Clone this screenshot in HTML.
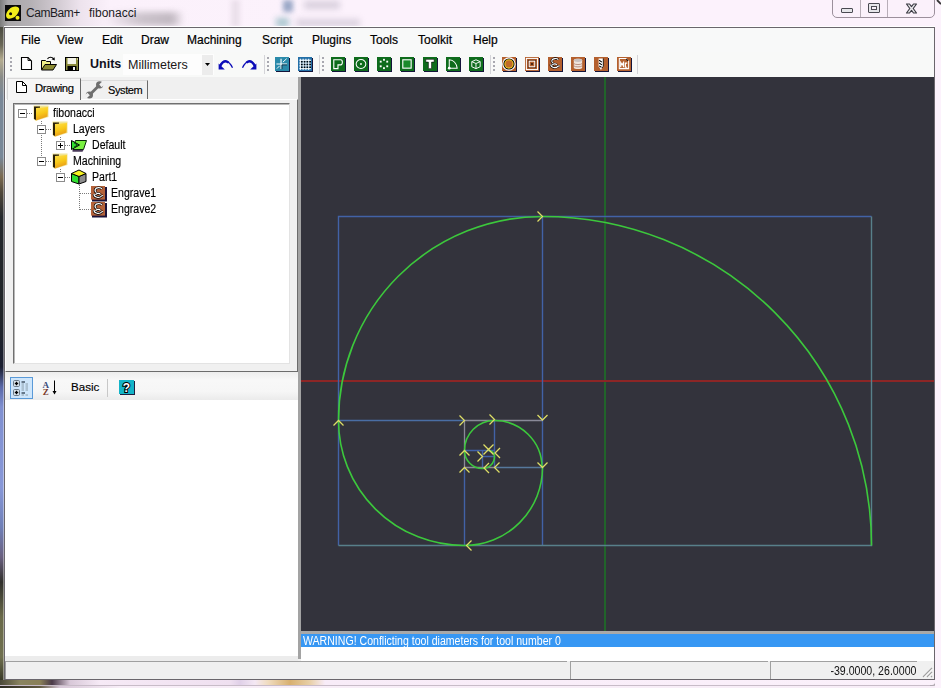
<!DOCTYPE html>
<html><head><meta charset="utf-8">
<style>
*{margin:0;padding:0;box-sizing:border-box}
html,body{width:941px;height:688px;overflow:hidden}
body{position:relative;font-family:"Liberation Sans",sans-serif;font-size:12px;color:#000;background:#fcf2fc}
.a{position:absolute}
svg{display:block}
#win{left:4px;top:27px;width:931px;height:653px;border:1px solid #6a666c;background:#f0f0f0}
#menubar{left:5px;top:28px;width:929px;height:24px;background:#f8f9f9}
#menubar span{position:absolute;top:5px;color:#000;-webkit-text-stroke:0.2px #000}
#toolbar{left:5px;top:52px;width:929px;height:25px;background:#f8f9f8}
#draw{left:301px;top:77px;width:633px;height:554px;background:#33333c;overflow:hidden}
#vsplit{left:298px;top:77px;width:3px;height:582px;background:#a3a3a3}
#leftp{left:5px;top:77px;width:293px;height:295px;background:#f0f0f0}
#tabpage{left:5px;top:99px;width:293px;height:273px;border-top:1px solid #fff;border-left:1px solid #fff;border-right:1px solid #6c6c6c;border-bottom:1px solid #6c6c6c}
#tree{left:13px;top:103px;width:277px;height:261px;background:#fff;border-top:1px solid #707070;border-left:1px solid #707070;border-right:1px solid #e3e3e3;border-bottom:1px solid #e3e3e3;box-shadow:inset 1px 1px 0 #b8b8b8}
#ptool{left:5px;top:372px;width:293px;height:28px;background:linear-gradient(#ededed,#f8f8f8 30%,#f6f6f6 70%,#ebebeb)}
#pgrid{left:5px;top:400px;width:293px;height:256px;background:#fff}
#warn{left:301px;top:631px;width:633px;height:30px;background:#fff}
#warnbar{left:301px;top:634px;width:633px;height:13px;background:#3797f3;color:#fff;font-size:12px;line-height:15px;padding-left:2px;white-space:nowrap;overflow:hidden}
#warnline{left:301px;top:631px;width:633px;height:3px;background:#a8a8a8}
#status{left:5px;top:661px;width:929px;height:18px;background:#f0f0f0}
.sp{position:absolute;top:0;height:18px;border-top:1px solid #a0a0a0;border-left:1px solid #a0a0a0}
.tr{position:absolute;white-space:nowrap;color:#000;-webkit-text-stroke:0.15px #000}
.ic{position:absolute}
</style></head><body>
<!-- glass background -->
<div class="a" style="left:0;top:0;width:941px;height:27px;background:linear-gradient(90deg,#7c7c7c 0,#a9a7a9 8px,#b4b0b4 30px,#cfc8cf 55px,#ede3ed 80px,#fbf1fb 110px,#fcf2fc 300px,#fcf2fc 941px)"></div>

<div class="a" style="left:231px;top:0;width:9px;height:27px;background:#ebe0eb;filter:blur(2px)"></div>
<div class="a" style="left:104px;top:12px;width:80px;height:14px;background:linear-gradient(90deg,#d0c8d000,#b8b0b8 45%,#a8a0a8 85%,#c8c0c800);filter:blur(3px);opacity:.7"></div>
<div class="a" style="left:283px;top:0;width:10px;height:12px;background:#7088b0;filter:blur(2.5px);opacity:.7"></div>
<div class="a" style="left:304px;top:1px;width:36px;height:8px;background:#c0b8c8;filter:blur(3px);opacity:.6"></div>
<div class="a" style="left:276px;top:18px;width:13px;height:9px;background:#70a8b0;filter:blur(3px);opacity:.6"></div>
<div class="a" style="left:296px;top:19px;width:64px;height:8px;background:#c0b8c8;filter:blur(3px);opacity:.55"></div>
<div class="a" style="left:0;top:27px;width:4px;height:653px;background:linear-gradient(#4a4a40 0,#6a6858 18px,#b4ac90 33px,#8a8c88 50px,#7a8898 70px,#788898 130px,#7a6a50 150px,#50483a 165px,#24282c 190px,#202428 290px,#1a1e30 340px,#5a68a8 360px,#8090d0 380px,#8898d8 460px,#7080b8 500px,#6a6080 530px,#30302c 555px,#6a6a4a 590px,#707050 630px,#3a3a28 653px)"></div>
<div class="a" style="left:0;top:680px;width:941px;height:8px;background:linear-gradient(90deg,#4a4838 0,#8a8460 20px,#8a8058 40px,#4a3a48 52px,#d8c8d8 70px,#f6eaf6 100px,#efe0f0 230px,#e0d0e8 240px,#f4e8f4 255px,#f0dcc0 268px,#d8b070 290px,#e8d0a8 310px,#f8ecf8 325px,#fbf1fb 941px)"></div>
<div class="a" style="left:0;top:685px;width:936px;height:1px;background:#c8bcc8"></div>
<div class="a" style="left:0;top:686px;width:941px;height:2px;background:linear-gradient(90deg,#2a2820 0,#605840 40px,#d8c8d8 60px,#f8eef8 120px,#f8eef8 941px)"></div>
<div class="a" style="left:936px;top:680px;width:5px;height:8px;background:#fcf2fc"></div>
<div class="a" style="left:930px;top:681px;width:6px;height:5px;border-right:1px solid #b0a8b0;border-bottom:1px solid #b0a8b0;border-radius:0 0 4px 0"></div>
<div class="a" style="left:935px;top:27px;width:6px;height:661px;background:#fcf2fc"></div>
<!-- title icon -->
<svg class="a" style="left:5px;top:5px" width="16" height="16" viewBox="0 0 16 16">
<rect width="16" height="16" fill="#0a0a0a"/>
<path d="M1.2,11.5 C0.6,8.5 3,4.2 7,2.2 C10.5,0.6 14,1.5 14.2,4 C14.4,6.8 11.5,11 8.5,12.6 C5.5,14.4 1.8,14.2 1.2,11.5 Z" fill="#f2ee1a"/>
<circle cx="5.6" cy="8.8" r="1.5" fill="#0a0a0a"/>
<circle cx="12.5" cy="12.8" r="2" fill="#f2ee1a"/>
</svg>
<div class="a" style="left:26px;top:6px;font-size:12px;letter-spacing:-0.45px;color:#1c1c24;white-space:nowrap">CamBam+</div><div class="a" style="left:89px;top:6px;font-size:12px;letter-spacing:0px;color:#1c1c24;white-space:nowrap">fibonacci</div>
<!-- window buttons -->
<div class="a" style="left:832px;top:-3px;width:103px;height:21px;border:1px solid #9c909c;border-radius:0 0 5px 5px;background:#fbf1fb"></div>
<div class="a" style="left:860px;top:0;width:1px;height:17px;background:#b8aeb8"></div>
<div class="a" style="left:887px;top:0;width:1px;height:17px;background:#b8aeb8"></div>
<div class="a" style="left:841px;top:8px;width:12px;height:5px;border:1px solid #4a4a52;border-radius:1px;background:#e6e6ea"></div>
<div class="a" style="left:868px;top:3px;width:12px;height:10px;border:1px solid #4a4a52;border-radius:1px;background:#e6e6ea"></div>
<div class="a" style="left:871px;top:6px;width:6px;height:4px;border:1px solid #4a4a52;background:#f8f0f8"></div>
<svg class="a" style="left:904px;top:2px" width="15" height="13" viewBox="0 0 15 13">
<path d="M2.5,2 L5.5,2 L7.5,4.6 L9.5,2 L12.5,2 L9.2,6.5 L12.5,11 L9.5,11 L7.5,8.4 L5.5,11 L2.5,11 L5.8,6.5 Z" fill="#ecebef" stroke="#3c3c44" stroke-width="1.2" stroke-linejoin="round"/>
</svg>
<svg class="a" style="left:936px;top:0" width="5" height="5"><path d="M1,0 L5,4" stroke="#333" stroke-width="1.8"/></svg>
<div class="a" style="left:4px;top:26px;width:931px;height:1px;background:#fff"></div>
<div class="a" id="win"></div>
<div class="a" style="left:3px;top:27px;width:1px;height:653px;background:rgba(255,255,255,.4)"></div>
<!-- menubar -->
<div class="a" id="menubar">
<span style="left:16px">File</span><span style="left:52px">View</span><span style="left:97px">Edit</span><span style="left:136px">Draw</span><span style="left:182px">Machining</span><span style="left:257px">Script</span><span style="left:307px">Plugins</span><span style="left:365px">Tools</span><span style="left:413px">Toolkit</span><span style="left:468px">Help</span>
</div>
<div class="a" id="toolbar"></div>
<!-- grips -->
<svg class="a" style="left:9px;top:56px" width="4" height="17"><g fill="#a8a8b0"><rect x="1" y="1" width="2" height="2"/><rect x="1" y="5" width="2" height="2"/><rect x="1" y="9" width="2" height="2"/><rect x="1" y="13" width="2" height="2"/></g></svg>
<div class="a" style="left:264px;top:55px;width:1px;height:19px;background:#d4d4d8"></div>
<svg class="a" style="left:266px;top:56px" width="4" height="17"><g fill="#a8a8b0"><rect x="1" y="1" width="2" height="2"/><rect x="1" y="5" width="2" height="2"/><rect x="1" y="9" width="2" height="2"/><rect x="1" y="13" width="2" height="2"/></g></svg>
<div class="a" style="left:319px;top:55px;width:1px;height:19px;background:#d4d4d8"></div>
<svg class="a" style="left:321px;top:56px" width="4" height="17"><g fill="#a8a8b0"><rect x="1" y="1" width="2" height="2"/><rect x="1" y="5" width="2" height="2"/><rect x="1" y="9" width="2" height="2"/><rect x="1" y="13" width="2" height="2"/></g></svg>
<div class="a" style="left:490px;top:55px;width:1px;height:19px;background:#d4d4d8"></div>
<svg class="a" style="left:492px;top:56px" width="4" height="17"><g fill="#a8a8b0"><rect x="1" y="1" width="2" height="2"/><rect x="1" y="5" width="2" height="2"/><rect x="1" y="9" width="2" height="2"/><rect x="1" y="13" width="2" height="2"/></g></svg>
<div class="a" style="left:637px;top:55px;width:1px;height:19px;background:#d4d4d8"></div>
<!-- new/open/save -->
<svg class="a" style="left:20px;top:56px" width="13" height="15" viewBox="0 0 13 15">
<path d="M1.5,1.5 H8 L11.5,5 V13.5 H1.5 Z" fill="#fff" stroke="#000" stroke-width="1.1"/>
<path d="M8,1.5 V4.5 H11" fill="none" stroke="#000" stroke-width="0.9"/>
</svg>
<svg class="a" style="left:40px;top:56px" width="18" height="16" viewBox="0 0 18 16">
<path d="M1.5,13.5 V4.5 H5.5 L6.5,5.5 H10.5 V8.5" fill="#f0f088" stroke="#000" stroke-width="1"/>
<path d="M1.5,14 L5,8.5 H16.5 L13,14 Z" fill="#8c8c34" stroke="#000" stroke-width="1"/>
<path d="M7.5,2.8 C9,0.8 12,0.8 13.5,2.6" fill="none" stroke="#000" stroke-width="1.1"/>
<path d="M11.5,3.2 L14.8,4.6 L14.6,1.2 Z" fill="#000"/>
</svg>
<svg class="a" style="left:65px;top:57px" width="14" height="14" viewBox="0 0 14 14">
<rect x="0.5" y="0.5" width="13" height="13" fill="#8a8a3a" stroke="#000"/>
<rect x="2.5" y="1" width="8.5" height="6" fill="#f4f4e8"/>
<rect x="2.5" y="9" width="9" height="4.5" fill="#000"/>
<rect x="8" y="10" width="2" height="3" fill="#f0f0f0"/>
<rect x="12" y="1.5" width="1" height="1" fill="#fff"/>
</svg>
<div class="a" style="left:90px;top:57px;font-weight:bold;font-size:12.5px;color:#101020">Units</div>
<!-- combo -->
<div class="a" style="left:123px;top:54px;width:91px;height:21px;background:#fdfdfd"></div>
<div class="a" style="left:202px;top:55px;width:11px;height:20px;background:#ececec"></div>
<svg class="a" style="left:205px;top:63px" width="6" height="4"><path d="M0,0 H5 L2.5,3 Z" fill="#000"/></svg>
<div class="a" style="left:128px;top:58px;font-size:12.5px;color:#201818">Millimeters</div>
<!-- undo/redo -->
<svg class="a" style="left:216px;top:58px" width="18" height="13" viewBox="0 0 18 13">
<path d="M16.5,9.8 C14.5,5.5 12,3.4 9.8,3.4 C7.5,3.4 5.5,5.2 4.2,8" fill="none" stroke="#0c0cb8" stroke-width="1.3"/>
<path d="M12.5,4.6 C11.5,3.8 10.6,3.2 9.8,3.2 C7.5,3.2 5.5,5 4,8.3" fill="none" stroke="#0c0cb8" stroke-width="2.4"/>
<path d="M2.6,5.6 L2.6,11.4 L8.8,11.4 Z" fill="#0c0cb8"/>
</svg>
<svg class="a" style="left:241px;top:58px" width="18" height="13" viewBox="0 0 18 13">
<path d="M1.5,9.8 C3.5,5.5 6,3.4 8.2,3.4 C10.5,3.4 12.5,5.2 13.8,8" fill="none" stroke="#0c0cb8" stroke-width="1.3"/>
<path d="M5.5,4.6 C6.5,3.8 7.4,3.2 8.2,3.2 C10.5,3.2 12.5,5 14,8.3" fill="none" stroke="#0c0cb8" stroke-width="2.4"/>
<path d="M15.4,5.6 L15.4,11.4 L9.2,11.4 Z" fill="#0c0cb8"/>
</svg>
<!-- tool icons -->
<svg class="a" style="left:275px;top:57px" width="15" height="15" viewBox="0 0 15 15">
<rect x="1" y="1" width="14" height="14" fill="#14143a"/>
<rect x="0" y="0" width="14" height="14" fill="#2a8aaa"/>
<g transform="scale(0.93)">
<path d="M6.5,2 V13 M1.5,7.5 H13" stroke="#ffffff" stroke-width="1.2" fill="none"/><path d="M7.5,8.5 V13 M7.5,8.5 H13" stroke="#0a2a40" stroke-width="0.9" fill="none"/><path d="M2,12.5 L5,9.5 M8.5,5.5 L12.5,1.8" stroke="#ffffff" stroke-width="1" fill="none"/></g></svg>
<svg class="a" style="left:298px;top:57px" width="15" height="15" viewBox="0 0 15 15">
<rect x="1" y="1" width="14" height="14" fill="#14143a"/>
<rect x="0" y="0" width="14" height="14" fill="#2470a8"/>
<g transform="scale(0.93)">
<path d="M2.5,2 V14" stroke="#ffffff" stroke-width="1.1"/><path d="M5.5,2 V14" stroke="#ffffff" stroke-width="1.1"/><path d="M8.5,2 V14" stroke="#ffffff" stroke-width="1.1"/><path d="M11.5,2 V14" stroke="#ffffff" stroke-width="1.1"/><path d="M1.5,3.5 H14" stroke="#ffffff" stroke-width="1.1"/><path d="M1.5,6.5 H14" stroke="#ffffff" stroke-width="1.1"/><path d="M1.5,9.5 H14" stroke="#ffffff" stroke-width="1.1"/><path d="M1.5,12.5 H14" stroke="#ffffff" stroke-width="1.1"/><rect x="3.3" y="4.3" width="1.6" height="1.6" fill="#000"/><rect x="3.3" y="7.3" width="1.6" height="1.6" fill="#000"/><rect x="3.3" y="10.3" width="1.6" height="1.6" fill="#000"/><rect x="6.3" y="4.3" width="1.6" height="1.6" fill="#000"/><rect x="6.3" y="7.3" width="1.6" height="1.6" fill="#000"/><rect x="6.3" y="10.3" width="1.6" height="1.6" fill="#000"/><rect x="9.3" y="4.3" width="1.6" height="1.6" fill="#000"/><rect x="9.3" y="7.3" width="1.6" height="1.6" fill="#000"/><rect x="9.3" y="10.3" width="1.6" height="1.6" fill="#000"/><rect x="12.3" y="4.3" width="1.6" height="1.6" fill="#000"/><rect x="12.3" y="7.3" width="1.6" height="1.6" fill="#000"/><rect x="12.3" y="10.3" width="1.6" height="1.6" fill="#000"/></g></svg>
<svg class="a" style="left:331px;top:57px" width="15" height="15" viewBox="0 0 15 15">
<rect x="1" y="1" width="14" height="14" fill="#14143a"/>
<rect x="0" y="0" width="14" height="14" fill="#0e6c1c"/>
<g transform="scale(0.93)">
<path d="M3,3 H10.5 C12.8,3 12.8,8.5 10.5,8.5 H7.5 V12.5 H3 Z" fill="#0e6c1c" stroke="#ffffff" stroke-width="1.2"/></g></svg>
<svg class="a" style="left:354px;top:57px" width="15" height="15" viewBox="0 0 15 15">
<rect x="1" y="1" width="14" height="14" fill="#14143a"/>
<rect x="0" y="0" width="14" height="14" fill="#0e6c1c"/>
<g transform="scale(0.93)">
<ellipse cx="7.5" cy="7.5" rx="5.2" ry="4.8" fill="none" stroke="#ffffff" stroke-width="1.1"/><circle cx="7.5" cy="7.5" r="1" fill="#ffffff"/></g></svg>
<svg class="a" style="left:377px;top:57px" width="15" height="15" viewBox="0 0 15 15">
<rect x="1" y="1" width="14" height="14" fill="#14143a"/>
<rect x="0" y="0" width="14" height="14" fill="#0e6c1c"/>
<g transform="scale(0.93)">
<rect x="6.5" y="2" width="2" height="2" fill="#ffffff"/><rect x="10" y="4" width="2" height="2" fill="#ffffff"/><rect x="10" y="9" width="2" height="2" fill="#ffffff"/><rect x="6.5" y="11" width="2" height="2" fill="#ffffff"/><rect x="3" y="9" width="2" height="2" fill="#ffffff"/><rect x="3" y="4" width="2" height="2" fill="#ffffff"/></g></svg>
<svg class="a" style="left:400px;top:57px" width="15" height="15" viewBox="0 0 15 15">
<rect x="1" y="1" width="14" height="14" fill="#14143a"/>
<rect x="0" y="0" width="14" height="14" fill="#0e6c1c"/>
<g transform="scale(0.93)">
<rect x="3" y="3" width="9" height="9" fill="#1a8a2a" stroke="#ffffff" stroke-width="1.2"/></g></svg>
<svg class="a" style="left:423px;top:57px" width="15" height="15" viewBox="0 0 15 15">
<rect x="1" y="1" width="14" height="14" fill="#14143a"/>
<rect x="0" y="0" width="14" height="14" fill="#0e6c1c"/>
<g transform="scale(0.93)">
<path d="M3,2.5 H12 V5.5 H9.2 V12.5 H5.8 V5.5 H3 Z" fill="#ffffff" stroke="#000" stroke-width="0.6"/></g></svg>
<svg class="a" style="left:446px;top:57px" width="15" height="15" viewBox="0 0 15 15">
<rect x="1" y="1" width="14" height="14" fill="#14143a"/>
<rect x="0" y="0" width="14" height="14" fill="#0e6c1c"/>
<g transform="scale(0.93)">
<path d="M3.5,12 V3 C8,3 11.5,7 12,12 Z" fill="none" stroke="#ffffff" stroke-width="1.1"/><circle cx="3.5" cy="12" r="1.5" fill="#ffffff"/></g></svg>
<svg class="a" style="left:469px;top:57px" width="15" height="15" viewBox="0 0 15 15">
<rect x="1" y="1" width="14" height="14" fill="#14143a"/>
<rect x="0" y="0" width="14" height="14" fill="#0e6c1c"/>
<g transform="scale(0.93)">
<path d="M3,5 L7.5,3 L12,5 V10.5 L7.5,12.5 L3,10.5 Z M3,5 L7.5,7 L12,5 M7.5,7 V12.5" fill="none" stroke="#ffffff" stroke-width="1"/></g></svg>
<svg class="a" style="left:502px;top:57px" width="15" height="15" viewBox="0 0 15 15">
<rect x="1" y="1" width="14" height="14" fill="#14143a"/>
<rect x="0" y="0" width="14" height="14" fill="#b4602e"/>
<g transform="scale(0.93)">
<circle cx="7.5" cy="7.5" r="7.2" fill="#fff"/><circle cx="7.5" cy="7.5" r="6" fill="#000"/><circle cx="7.5" cy="7.5" r="5" fill="#f0d020"/><circle cx="7.5" cy="7.5" r="3.9" fill="#c06a28"/></g></svg>
<svg class="a" style="left:525px;top:57px" width="15" height="15" viewBox="0 0 15 15">
<rect x="1" y="1" width="14" height="14" fill="#14143a"/>
<rect x="0" y="0" width="14" height="14" fill="#b4602e"/>
<g transform="scale(0.93)">
<rect x="1.5" y="1.5" width="12" height="12" fill="none" stroke="#ffffff" stroke-width="1.1"/><rect x="3.5" y="3.5" width="8" height="8" fill="none" stroke="#5a2a10" stroke-width="1"/><rect x="4.5" y="4.5" width="6" height="6" fill="none" stroke="#ffffff" stroke-width="1"/><rect x="6.5" y="6.5" width="2" height="2" fill="#402010"/></g></svg>
<svg class="a" style="left:548px;top:57px" width="15" height="15" viewBox="0 0 15 15">
<rect x="1" y="1" width="14" height="14" fill="#14143a"/>
<rect x="0" y="0" width="14" height="14" fill="#b4602e"/>
<g transform="scale(0.93)">
<path d="M11,2.8 C10,1.2 5,1.2 4.2,3.5 C3.8,5 4.3,6 5.5,6.5 M3,8 C3,11.5 8.5,12.5 10.5,10 L12.5,9.5 M4.5,9 C5.5,7 8.5,7 9.5,8.5" fill="none" stroke="#000" stroke-width="2.6"/><path d="M11,2.8 C10,1.2 5,1.2 4.2,3.5 C3.8,5 4.3,6 5.5,6.5 M3,8 C3,11.5 8.5,12.5 10.5,10 L12.5,9.5 M4.5,9 C5.5,7 8.5,7 9.5,8.5" fill="none" stroke="#fff" stroke-width="1.2"/></g></svg>
<svg class="a" style="left:571px;top:57px" width="15" height="15" viewBox="0 0 15 15">
<rect x="1" y="1" width="14" height="14" fill="#14143a"/>
<rect x="0" y="0" width="14" height="14" fill="#b4602e"/>
<g transform="scale(0.93)">
<path d="M3,3.5 C3,1.5 12,1.5 12,3.5 V11.5 C12,13.5 3,13.5 3,11.5 Z" fill="#f0e4dc"/><ellipse cx="7.5" cy="3.6" rx="4.3" ry="1.8" fill="#c8c0c0"/><path d="M3,7 C4,8.5 11,8.5 12,7 M3,9.5 C4,11 11,11 12,9.5" fill="none" stroke="#b08070" stroke-width="0.9"/></g></svg>
<svg class="a" style="left:594px;top:57px" width="15" height="15" viewBox="0 0 15 15">
<rect x="1" y="1" width="14" height="14" fill="#14143a"/>
<rect x="0" y="0" width="14" height="14" fill="#b4602e"/>
<g transform="scale(0.93)">
<path d="M5,1.5 H10 V10 L7.5,14 L5,10 Z" fill="#fff"/><path d="M10,1.5 V10 L8.5,12" fill="none" stroke="#000" stroke-width="0.9"/><path d="M5.5,3.5 L8.5,5.5 M5.5,6.5 L8.5,8.5 M5.5,9.5 L8,11" stroke="#000" stroke-width="1.1"/></g></svg>
<svg class="a" style="left:617px;top:57px" width="15" height="15" viewBox="0 0 15 15">
<rect x="1" y="1" width="14" height="14" fill="#14143a"/>
<rect x="0" y="0" width="14" height="14" fill="#b4602e"/>
<g transform="scale(0.93)">
<path d="M2.5,1.5 H9.5 L12.5,4.5 V12.5 H2.5 Z" fill="none" stroke="#fff" stroke-width="1.1"/><path d="M10,2.2 L12,4.2" stroke="#000" stroke-width="1.2"/><path d="M4,11 V6 L5.5,8.5 L7,6 V11 M11,6.5 H9 V11 H11" fill="none" stroke="#fff" stroke-width="1.3"/></g></svg>
<!-- left panel -->
<div class="a" id="leftp"></div>
<div class="a" id="tabpage"></div>
<div class="a" style="left:5px;top:77px;width:1px;height:22px;background:#fff"></div>
<div class="a" style="left:7px;top:78px;width:74px;height:22px;background:#f6f6f6;border-top:1px solid #d8d8d8;border-left:1px solid #d8d8d8;border-right:1px solid #6a6a6a"></div>
<div class="a" style="left:81px;top:80px;width:67px;height:19px;background:#f0f0f0;border-top:1px solid #dcdcdc;border-right:1px solid #6a6a6a"></div>
<svg class="a" style="left:15px;top:80px" width="13" height="14" viewBox="0 0 13 14"><path d="M1.5,1.5 H7.5 L11.5,5.5 V12.5 H1.5 Z" fill="#fff" stroke="#000"/><path d="M7.5,1.5 V5.5 H11.5" fill="none" stroke="#000"/></svg>
<div class="tr" style="left:35px;top:82px;font-size:11.3px;letter-spacing:-0.4px">Drawing</div>
<svg class="a" style="left:84px;top:80px" width="20" height="20" viewBox="0 0 20 20"><path d="M6,14.5 L15,5.5" stroke="#6e6e6e" stroke-width="2.8"/><circle cx="15.6" cy="4.8" r="3.6" fill="#6e6e6e"/><circle cx="5.4" cy="15" r="3.6" fill="#6e6e6e"/><path d="M15.2,4.6 L18.5,1.3 L21,4 L17.6,7.2 Z" fill="#f0f0f0"/><path d="M5.8,15.2 L2.5,18.5 L0,16 L3.4,12.8 Z" fill="#f0f0f0"/></svg>
<div class="tr" style="left:108px;top:84px;font-size:11px;letter-spacing:-0.4px">System</div>
<div class="a" id="tree"></div>
<div class="a" style="left:27px;top:113px;width:6px;height:1px;background:repeating-linear-gradient(90deg,#7a7a7a 0 1px,transparent 1px 2px)"></div>
<div class="a" style="left:41px;top:121px;width:1px;height:36px;background:repeating-linear-gradient(#7a7a7a 0 1px,transparent 1px 2px)"></div>
<div class="a" style="left:46px;top:129px;width:6px;height:1px;background:repeating-linear-gradient(90deg,#7a7a7a 0 1px,transparent 1px 2px)"></div>
<div class="a" style="left:46px;top:161px;width:6px;height:1px;background:repeating-linear-gradient(90deg,#7a7a7a 0 1px,transparent 1px 2px)"></div>
<div class="a" style="left:60px;top:137px;width:1px;height:4px;background:repeating-linear-gradient(#7a7a7a 0 1px,transparent 1px 2px)"></div>
<div class="a" style="left:60px;top:169px;width:1px;height:4px;background:repeating-linear-gradient(#7a7a7a 0 1px,transparent 1px 2px)"></div>
<div class="a" style="left:65px;top:145px;width:6px;height:1px;background:repeating-linear-gradient(90deg,#7a7a7a 0 1px,transparent 1px 2px)"></div>
<div class="a" style="left:65px;top:177px;width:6px;height:1px;background:repeating-linear-gradient(90deg,#7a7a7a 0 1px,transparent 1px 2px)"></div>
<div class="a" style="left:79px;top:185px;width:1px;height:25px;background:repeating-linear-gradient(#7a7a7a 0 1px,transparent 1px 2px)"></div>
<div class="a" style="left:80px;top:193px;width:11px;height:1px;background:repeating-linear-gradient(90deg,#7a7a7a 0 1px,transparent 1px 2px)"></div>
<div class="a" style="left:80px;top:209px;width:11px;height:1px;background:repeating-linear-gradient(90deg,#7a7a7a 0 1px,transparent 1px 2px)"></div>
<svg class="a" style="left:18px;top:109px" width="9" height="9" viewBox="0 0 9 9"><rect x="0.5" y="0.5" width="8" height="8" fill="#fff" stroke="#8c8c8c"/><path d="M2,4.5 H7" stroke="#000"/></svg>
<svg class="a" style="left:37px;top:125px" width="9" height="9" viewBox="0 0 9 9"><rect x="0.5" y="0.5" width="8" height="8" fill="#fff" stroke="#8c8c8c"/><path d="M2,4.5 H7" stroke="#000"/></svg>
<svg class="a" style="left:56px;top:141px" width="9" height="9" viewBox="0 0 9 9"><rect x="0.5" y="0.5" width="8" height="8" fill="#fff" stroke="#8c8c8c"/><path d="M2,4.5 H7" stroke="#000"/><path d="M4.5,2 V7" stroke="#000"/></svg>
<svg class="a" style="left:37px;top:157px" width="9" height="9" viewBox="0 0 9 9"><rect x="0.5" y="0.5" width="8" height="8" fill="#fff" stroke="#8c8c8c"/><path d="M2,4.5 H7" stroke="#000"/></svg>
<svg class="a" style="left:56px;top:173px" width="9" height="9" viewBox="0 0 9 9"><rect x="0.5" y="0.5" width="8" height="8" fill="#fff" stroke="#8c8c8c"/><path d="M2,4.5 H7" stroke="#000"/></svg>
<svg class="a" style="left:33px;top:105px" width="17" height="17" viewBox="0 0 17 17">
<defs><linearGradient id="fg33_105" x1="0" y1="0" x2="0.3" y2="1"><stop offset="0" stop-color="#ffe24a"/><stop offset="0.55" stop-color="#f8c818"/><stop offset="1" stop-color="#e89a18"/></linearGradient></defs>
<path d="M0.5,0.5 H15.5 V12 L2.5,16 L0.5,13.5 Z" fill="#f0e498"/>
<path d="M1,1.5 H7 V3 H3 V15 L1,14 Z" fill="#2a2008"/>
<path d="M3,3 L15,2 L14.5,11.5 L3,15.5 Z" fill="url(#fg33_105)"/>
</svg>
<svg class="a" style="left:52px;top:121px" width="17" height="17" viewBox="0 0 17 17">
<defs><linearGradient id="fg52_121" x1="0" y1="0" x2="0.3" y2="1"><stop offset="0" stop-color="#ffe24a"/><stop offset="0.55" stop-color="#f8c818"/><stop offset="1" stop-color="#e89a18"/></linearGradient></defs>
<path d="M0.5,0.5 H15.5 V12 L2.5,16 L0.5,13.5 Z" fill="#f0e498"/>
<path d="M1,1.5 H7 V3 H3 V15 L1,14 Z" fill="#2a2008"/>
<path d="M3,3 L15,2 L14.5,11.5 L3,15.5 Z" fill="url(#fg52_121)"/>
</svg>
<svg class="a" style="left:52px;top:153px" width="17" height="17" viewBox="0 0 17 17">
<defs><linearGradient id="fg52_153" x1="0" y1="0" x2="0.3" y2="1"><stop offset="0" stop-color="#ffe24a"/><stop offset="0.55" stop-color="#f8c818"/><stop offset="1" stop-color="#e89a18"/></linearGradient></defs>
<path d="M0.5,0.5 H15.5 V12 L2.5,16 L0.5,13.5 Z" fill="#f0e498"/>
<path d="M1,1.5 H7 V3 H3 V15 L1,14 Z" fill="#2a2008"/>
<path d="M3,3 L15,2 L14.5,11.5 L3,15.5 Z" fill="url(#fg52_153)"/>
</svg>
<svg class="a" style="left:70px;top:139px" width="18" height="14" viewBox="0 0 18 14">
<path d="M2.5,11 H13.5 L12.5,12.8 H2.5 Z" fill="#4a3a5a"/>
<path d="M5.5,1.5 H16.5 L13.5,10.5 H3 Z" fill="#78f040" stroke="#0a2a0a" stroke-width="1"/>
<path d="M1.5,1.5 V10.5 L9.5,6 Z" fill="#30e030" stroke="#000" stroke-width="1"/>
<path d="M4,3.8 L7.5,6 L4,8.2" fill="none" stroke="#0a3a0a" stroke-width="1"/>
</svg>
<svg class="a" style="left:70px;top:169px" width="17" height="16" viewBox="0 0 17 16">
<path d="M1.5,4.5 L9,7.5 V15 L1.5,12.5 Z" fill="#30e030" stroke="#000" stroke-width="1"/>
<path d="M16,4.5 L9,7.5 V15 L16,12.5 Z" fill="#8c8c8c" stroke="#000" stroke-width="1"/>
<path d="M1.5,4.5 L9,1 L16,4.5 L9,7.5 Z" fill="#f4f020" stroke="#000" stroke-width="1"/>
</svg>
<svg class="a" style="left:91px;top:186px" width="16" height="16" viewBox="0 0 16 16">
<rect x="1" y="1" width="15" height="14.5" fill="#1a1238"/><rect x="0" y="0" width="14" height="13.6" fill="#b4623a"/>
<path d="M11,3 C10,1.2 5,1.2 4.2,3.5 C3.8,5 4.3,6 5.5,6.5 M3,8 C3,11.5 8.5,12.5 10.5,10 L12,9.5 M4.5,9 C5.5,7 8.5,7 9.5,8.5" fill="none" stroke="#000" stroke-width="2.6"/>
<path d="M11,3 C10,1.2 5,1.2 4.2,3.5 C3.8,5 4.3,6 5.5,6.5 M3,8 C3,11.5 8.5,12.5 10.5,10 L12,9.5 M4.5,9 C5.5,7 8.5,7 9.5,8.5" fill="none" stroke="#fff" stroke-width="1.2"/>
</svg>
<svg class="a" style="left:91px;top:202px" width="16" height="16" viewBox="0 0 16 16">
<rect x="1" y="1" width="15" height="14.5" fill="#1a1238"/><rect x="0" y="0" width="14" height="13.6" fill="#b4623a"/>
<path d="M11,3 C10,1.2 5,1.2 4.2,3.5 C3.8,5 4.3,6 5.5,6.5 M3,8 C3,11.5 8.5,12.5 10.5,10 L12,9.5 M4.5,9 C5.5,7 8.5,7 9.5,8.5" fill="none" stroke="#000" stroke-width="2.6"/>
<path d="M11,3 C10,1.2 5,1.2 4.2,3.5 C3.8,5 4.3,6 5.5,6.5 M3,8 C3,11.5 8.5,12.5 10.5,10 L12,9.5 M4.5,9 C5.5,7 8.5,7 9.5,8.5" fill="none" stroke="#fff" stroke-width="1.2"/>
</svg>
<div class="tr" style="left:53px;top:106px;font-size:12px;color:#000;transform:scaleX(0.88);transform-origin:0 0">fibonacci</div>
<div class="tr" style="left:73px;top:122px;font-size:12px;color:#000;transform:scaleX(0.88);transform-origin:0 0">Layers</div>
<div class="tr" style="left:92px;top:138px;font-size:12px;color:#000;transform:scaleX(0.88);transform-origin:0 0">Default</div>
<div class="tr" style="left:73px;top:154px;font-size:12px;color:#000;transform:scaleX(0.88);transform-origin:0 0">Machining</div>
<div class="tr" style="left:92px;top:170px;font-size:12px;color:#000;transform:scaleX(0.88);transform-origin:0 0">Part1</div>
<div class="tr" style="left:111px;top:186px;font-size:12px;color:#000;transform:scaleX(0.88);transform-origin:0 0">Engrave1</div>
<div class="tr" style="left:111px;top:202px;font-size:12px;color:#000;transform:scaleX(0.88);transform-origin:0 0">Engrave2</div>
<div class="a" id="ptool"></div>
<div class="a" style="left:10px;top:377px;width:23px;height:22px;background:#cfe6fb;border:1px solid #5a9ad8"></div>
<svg class="a" style="left:13px;top:380px" width="17" height="16" viewBox="0 0 17 16">
<rect x="0.5" y="0.5" width="6" height="6" rx="1.2" fill="#dde8f0" stroke="#6a7a88"/><path d="M1.8,3.5 H5.2 M3.5,1.8 V5.2" stroke="#000" stroke-width="1.3"/>
<rect x="0.5" y="9.5" width="6" height="6" rx="1.2" fill="#dde8f0" stroke="#6a7a88"/><path d="M1.8,12.5 H5.2 M3.5,10.8 V14.2" stroke="#000" stroke-width="1.3"/>
<path d="M8.5,2 H12" stroke="#203040" stroke-width="1.2"/><path d="M8.5,13 H12" stroke="#203040" stroke-width="1.2"/>
<path d="M8.5,4 H11 M12.5,4 H15 M8.5,6 H11 M12.5,6 H15 M8.5,8 H11 M12.5,8 H15 M8.5,10 H11 M12.5,10 H15 M8.5,15 H11 M12.5,15 H15" stroke="#7a8a98" stroke-width="0.8"/>
</svg>
<svg class="a" style="left:42px;top:380px" width="16" height="16" viewBox="0 0 16 16">
<text x="3.8" y="7.5" font-family="Liberation Serif" font-weight="bold" font-size="9" fill="#3a4a7a" text-anchor="middle">A</text>
<text x="3.8" y="15" font-family="Liberation Serif" font-weight="bold" font-size="9" fill="#7a3a2a" text-anchor="middle">Z</text>
<path d="M12.5,0.5 V13" stroke="#000" stroke-width="1"/><path d="M10.5,11 L12.5,14.5 L14.5,11 Z" fill="#000"/>
</svg>
<div class="tr" style="left:71px;top:380px;font-size:11.6px">Basic</div>
<div class="a" style="left:107px;top:379px;width:1px;height:18px;background:#c8c8c8"></div>
<svg class="a" style="left:119px;top:380px" width="16" height="15" viewBox="0 0 16 15">
<rect x="1" y="1" width="15" height="14" fill="#202040"/><rect x="0" y="0" width="15" height="14" fill="#14b4c8"/>
<text x="7.5" y="11.8" font-family="Liberation Sans" font-weight="bold" font-size="12" fill="#fff" stroke="#000" stroke-width="2" paint-order="stroke" text-anchor="middle">?</text>
</svg>
<div class="a" id="pgrid"></div>
<div class="a" id="vsplit"></div>
<div class="a" id="draw"></div>
<svg class="a" style="left:301px;top:77px" width="633" height="554" viewBox="301 77 633 554">
<line x1="605" y1="77" x2="605" y2="631" stroke="#21642a" stroke-width="2"/>
<line x1="301" y1="381" x2="934" y2="381" stroke="#8c2626" stroke-width="2"/>
<g fill="none" stroke-width="1.4">
<path d="M338.5,545.5 V216.5 H871.5 M542.5,216.5 V545.5 M464.5,467.5 V545.5 M494.5,420.5 V467.5 M464.5,450.5 H494.5 M482.5,450.5 V467.5 M482.5,456.5 H494.5" stroke="#4262a6"/>
<path d="M338.5,420.5 H464.5" stroke="#4a6ea4"/>
<path d="M494.5,467.5 H542.5" stroke="#56789c"/>
<path d="M338.5,545.5 H871.5 V216.5" stroke="#58808a"/>
</g>
<path d="M464.5,420.5 H542.5 M464.5,420.5 V467.5 H494.5" fill="none" stroke="#8a8a98" stroke-width="1.3"/>
<path d="M542.5,216.5 A329,329 0 0 1 871.5,545.5 M338.5,420.5 A204,204 0 0 1 542.5,216.5 M464.5,545.5 A125.5,125 0 0 1 338.5,420.5 M542.5,467.5 A78,78 0 0 1 464.5,545.5 M494.5,420.5 A47.5,47 0 0 1 542,467.5 M464.5,450.5 A30,30 0 0 1 494.5,420.5 M482.5,468.5 A18,18 0 0 1 464.5,450.5 M494.5,456.5 A12,12 0 0 1 482.5,468.5 M488.5,450.5 A6,6 0 0 1 494.5,456.5" fill="none" stroke="#3cc83c" stroke-width="1.6"/>
<path d="M537.5,211.5 L542.5,216.5 L537.5,221.5 M333.5,425.5 L338.5,420.5 L343.5,425.5 M471.5,540.5 L466.5,545.5 L471.5,550.5 M537.5,415 L542.5,420 L547.5,415 M537.5,462.5 L542.5,467.5 L547.5,462.5 M459.5,415.5 L464.5,420.5 L459.5,425.5 M489.5,414.5 L494.5,419.5 L489.5,424.5 M459.5,455.5 L464.5,450.5 L469.5,455.5 M459.5,472.5 L464.5,467.5 L469.5,472.5 M499.5,462.5 L494.5,467.5 L499.5,472.5 M489,463 L484,468 L489,473 M477.5,451.5 L482.5,456.5 L477.5,461.5 M483.5,444.5 L488.5,449.5 L493.5,444.5 M483.5,454.5 L488.5,449.5 L493.5,454.5 M500,448 L495,453 L500,458" fill="none" stroke="#dede66" stroke-width="1.25"/>
</svg>
<div class="a" id="warn"></div>
<div class="a" id="warnline"></div>
<div class="a" id="warnbar"><div style="transform:scaleX(0.88);transform-origin:0 0">WARNING! Conflicting tool diameters for tool number 0</div></div>
<div class="a" style="left:5px;top:656px;width:293px;height:5px;background:#ececec"></div>
<div class="a" id="status">
 <div class="sp" style="left:0;width:562px"></div>
 <div class="sp" style="left:565px;width:198px"></div>
 <div class="sp" style="left:765px;width:147px"><div style="position:absolute;right:1px;top:2px;font-size:12px;line-height:14px;color:#101010;white-space:nowrap;transform:scaleX(0.883);transform-origin:100% 0">-39.0000, 26.0000</div></div>
</div>
<svg class="a" style="left:921px;top:666px" width="12" height="12" viewBox="0 0 12 12"><path d="M11,2 L2,11 M11,6 L6,11 M11,10 L10,11" stroke="#a0a0a0" stroke-width="1.2"/><path d="M11.5,3 L3,11.5 M11.5,7 L7,11.5" stroke="#fff" stroke-width="0.8"/></svg>
</body></html>
